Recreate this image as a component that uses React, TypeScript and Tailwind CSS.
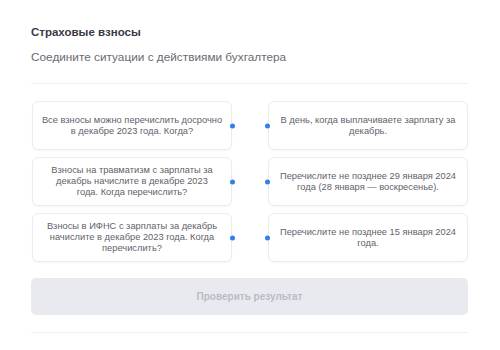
import React from 'react';

const pairs: { left: React.ReactNode; right: React.ReactNode }[] = [
  {
    left: <>Все взносы можно перечислить досрочно<br />в декабре 2023 года. Когда?</>,
    right: <>В день, когда выплачиваете зарплату за<br />декабрь.</>,
  },
  {
    left: <>Взносы на травматизм с зарплаты за<br />декабрь начислите в декабре 2023<br />года. Когда перечислить?</>,
    right: <>Перечислите не позднее 29 января 2024<br />года (28 января — воскресенье).</>,
  },
  {
    left: <>Взносы в ИФНС с зарплаты за декабрь<br />начислите в декабре 2023 года. Когда<br />перечислить?</>,
    right: <>Перечислите не позднее 15 января 2024<br />года.</>,
  },
];

const Card: React.FC<{ side: 'left' | 'right'; children: React.ReactNode }> = ({ side, children }) => (
  <div className="relative h-[49px] rounded-[6px] border border-[#ececf0] bg-white shadow-[0_1px_2px_rgba(0,0,0,0.04)] flex items-center justify-center px-1 text-center text-[9.3px] leading-[11px] text-[#5f5f6b] whitespace-nowrap">
    <span>{children}</span>
    <span
      className={`absolute top-1/2 -translate-y-1/2 w-[5px] h-[5px] rounded-full bg-[#2f80ed] ${
        side === 'left' ? 'right-[-4px]' : 'left-[-4px]'
      }`}
    />
  </div>
);

const App: React.FC = () => {
  return (
    <div className="w-[500px] h-[350px] bg-white font-['Liberation_Sans',Arial,sans-serif] pl-[31px] pr-[32px] pt-[25px]">
      <h1 className="text-[11.5px] leading-[14px] font-bold text-[#3a3a44]">Страховые взносы</h1>
      <p className="mt-[11px] text-[11.8px] leading-[14px] text-[#6a6a74]">Соедините ситуации с действиями бухгалтера</p>
      <div className="mt-[19px] h-px bg-[#efeff2]" />

      <div className="mt-[17px] grid grid-cols-[200px_200px] justify-between gap-y-[7px] pl-px">
        {pairs.map((p, i) => (
          <React.Fragment key={i}>
            <Card side="left">{p.left}</Card>
            <Card side="right">{p.right}</Card>
          </React.Fragment>
        ))}
      </div>

      <button className="mt-[16px] w-full h-[37px] rounded-[5px] bg-[#e9eaef] text-[10px] font-bold text-[#b9bbc7]">
        Проверить результат
      </button>
      <div className="mt-[17px] h-px bg-[#efeff2]" />
    </div>
  );
};

export default App;
